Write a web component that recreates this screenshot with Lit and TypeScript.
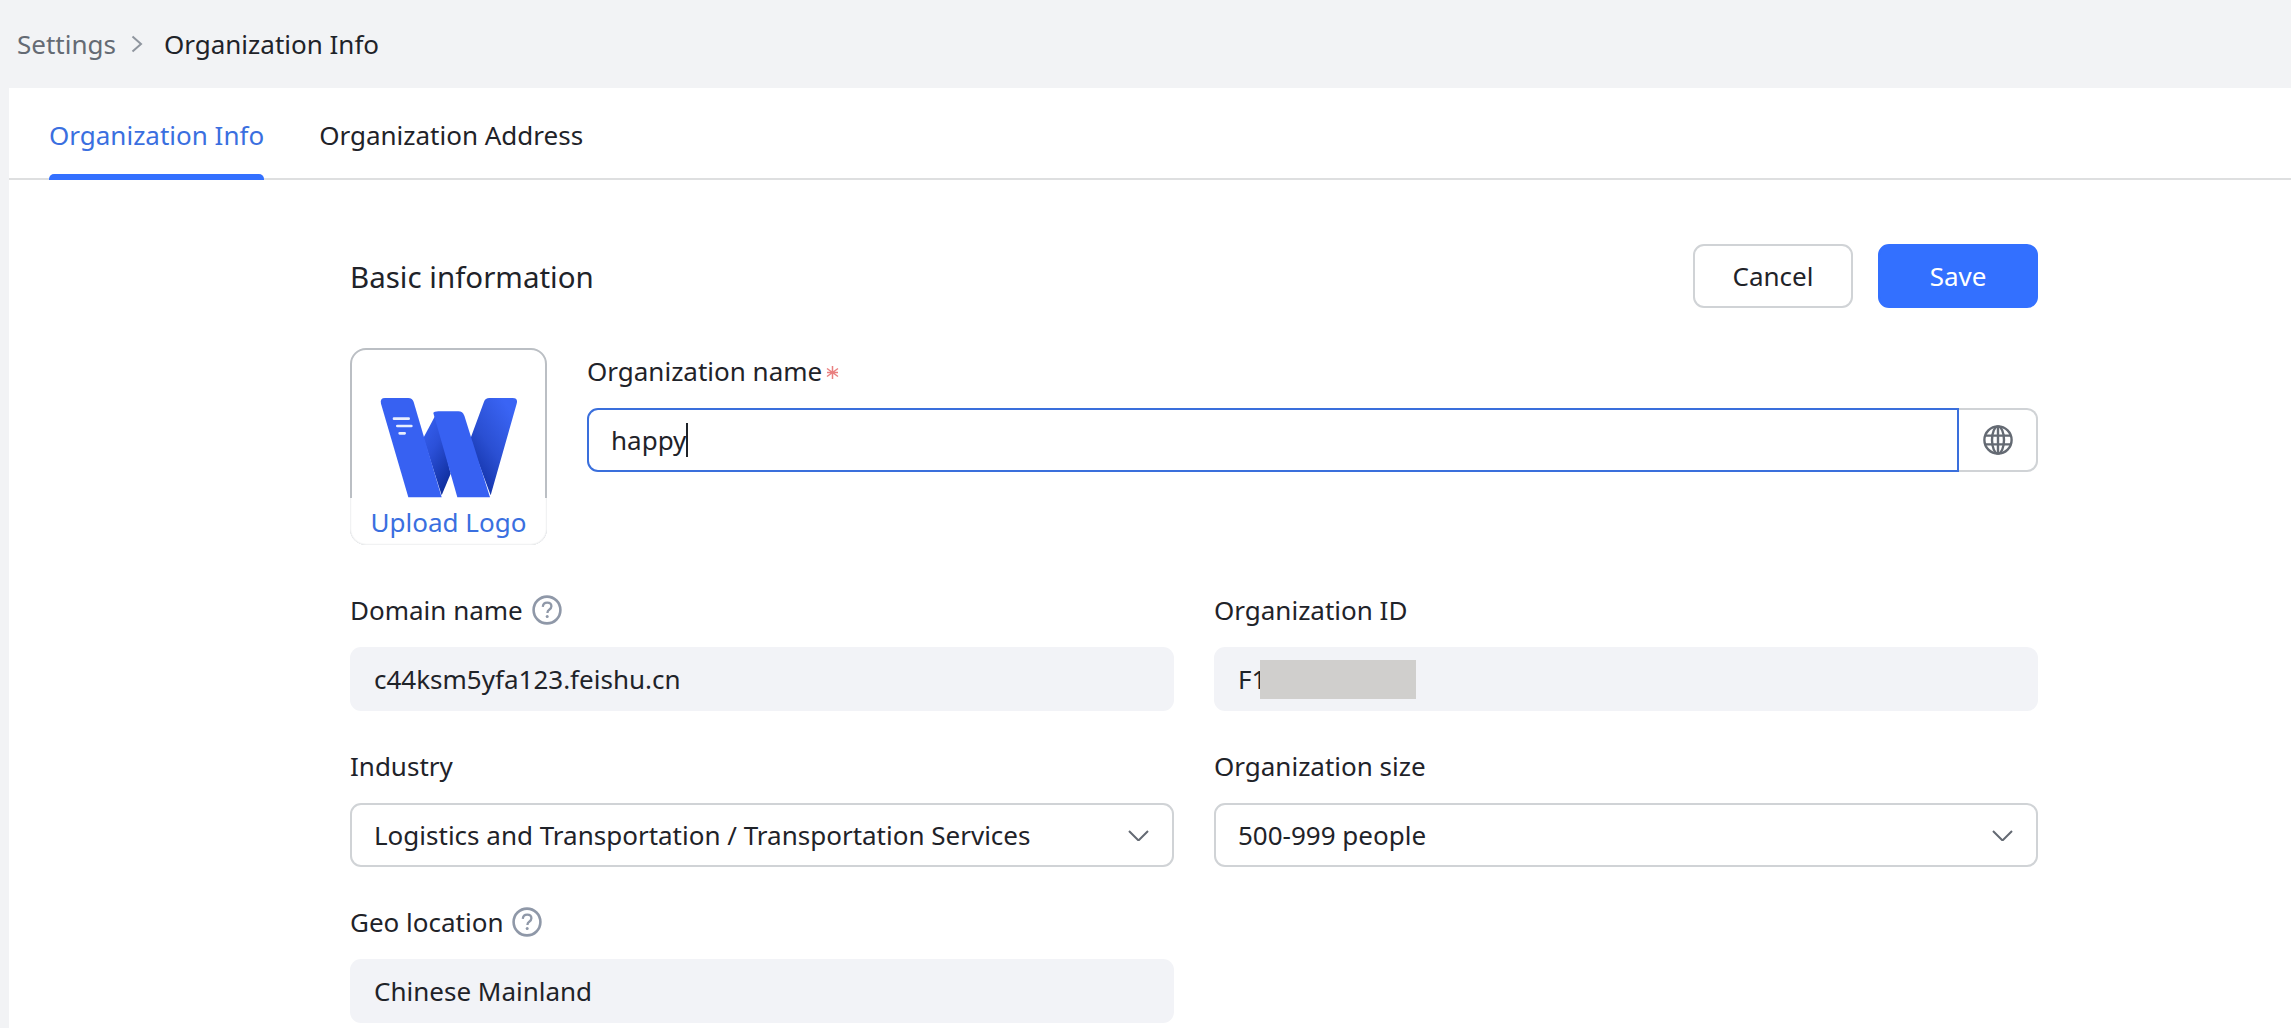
import { css, html, LitElement, svg } from "lit";
import { customElement } from "lit/decorators.js";

const helpIcon = html`<svg class="help" viewBox="0 0 30 30" aria-hidden="true">
  <circle cx="15" cy="15" r="13.4" fill="none" stroke="currentColor" stroke-width="2.6" />
  <path d="M10.8 11.8c.2-2.6 2-4.1 4.4-4.1 2.5 0 4.2 1.5 4.2 3.6 0 1.6-.8 2.5-2.2 3.4-1.2.8-1.7 1.4-1.7 2.8v.6" fill="none" stroke="currentColor" stroke-width="2.3" />
  <circle cx="15.2" cy="21.6" r="1.5" fill="currentColor" />
</svg>`;

const chevron = html`<svg class="chevron" viewBox="0 0 21 11" aria-hidden="true">
  <path d="M1 1l9.5 9.5L20 1" fill="none" stroke="currentColor" stroke-width="2" />
</svg>`;

const logo = svg`
  <defs>
    <linearGradient id="fold-a" x1="0.1" y1="0" x2="0.6" y2="1">
      <stop offset="0" stop-color="#3761f2" />
      <stop offset="0.45" stop-color="#2b50d8" />
      <stop offset="1" stop-color="#0f2f9f" />
    </linearGradient>
    <linearGradient id="fold-b" x1="0.1" y1="0.95" x2="0.75" y2="0.05">
      <stop offset="0" stop-color="#0d2c9e" />
      <stop offset="0.5" stop-color="#2a4fd2" />
      <stop offset="1" stop-color="#3a64f4" />
    </linearGradient>
  </defs>
  <path d="M280 325L320 250L362 432L335 497Z" fill="url(#fold-a)" />
  <path d="M478 205H548Q565 205 560 222L482 497L420 330L462 216Q466 205 478 205Z" fill="url(#fold-b)" />
  <path d="M165 205H235Q247 205 251 217L335 503H235L153 222Q149 205 165 205Z" fill="#3761f2" />
  <path d="M325 245H385Q398 245 403 258L480 503H382L310 250Q312 245 325 245Z" fill="#3761f2" />
  <g fill="none" stroke="#e8eefe" stroke-width="8" stroke-linecap="round">
    <path d="M192 267H236M202 289H244M209 311H224" />
  </g>
`;

@customElement("app-root")
export class AppRoot extends LitElement {
  static styles = css`
    :host {
      display: block;
      width: 2291px;
      height: 1028px;
      overflow: hidden;
      background: #f2f3f5;
      color: #1f2329;
      font-family: "Noto Sans", "Liberation Sans", sans-serif;
      font-size: 26px;
    }

    .crumbs {
      display: flex;
      align-items: center;
      height: 88px;
      padding-left: 17px;
      box-sizing: border-box;
    }

    .crumbs .parent {
      color: #646a73;
    }

    .crumbs svg {
      width: 12px;
      height: 18px;
      margin: 0 21px 0 15px;
      color: #8f959e;
    }

    .panel {
      margin-left: 9px;
      height: 940px;
      background: #fff;
    }

    .tabs {
      display: flex;
      gap: 55px;
      height: 92px;
      padding-left: 40px;
      box-sizing: border-box;
      border-bottom: 2px solid #dedfe0;
    }

    .tab {
      position: relative;
      display: flex;
      align-items: center;
      height: 92px;
      padding-top: 1px;
      box-sizing: border-box;
    }

    .tab.active {
      color: #3a6fe0;
    }

    .tab.active::after {
      content: "";
      position: absolute;
      left: 0;
      right: 0;
      bottom: 0;
      height: 6px;
      background: #3370ff;
      border-radius: 5px 5px 0 0;
    }

    .content {
      width: 1688px;
      margin-left: 341px;
    }

    .head {
      display: flex;
      align-items: center;
      justify-content: space-between;
      margin-top: 64px;
      height: 64px;
    }

    .head h2 {
      margin: 0;
      font-size: 29.5px;
      font-weight: 400;
    }

    .actions {
      display: flex;
      gap: 25px;
    }

    .btn {
      display: flex;
      align-items: center;
      justify-content: center;
      height: 64px;
      width: 160px;
      box-sizing: border-box;
      border: 2px solid #d0d3d6;
      border-radius: 11px;
      background: #fff;
    }

    .btn.primary {
      background: #3370ff;
      border-color: #3370ff;
      color: #fff;
    }

    .identity {
      display: flex;
      gap: 40px;
      margin-top: 40px;
    }

    .logo-card {
      position: relative;
      flex: none;
      width: 197px;
      height: 197px;
      box-sizing: border-box;
      border: 2px solid #bbbfc4;
      border-radius: 16px;
      background: #fff;
    }

    .logo-card svg {
      display: block;
      width: 193px;
      height: 193px;
    }

    .logo-card .upload {
      position: absolute;
      left: -2px;
      right: -2px;
      bottom: -2px;
      height: 47px;
      display: flex;
      align-items: center;
      justify-content: center;
      box-sizing: border-box;
      padding-top: 2px;
      border: 1px solid #f1f2f3;
      border-top: 0;
      border-radius: 0 0 16px 16px;
      background: rgba(255, 255, 255, 0.95);
      color: #3a6fe0;
    }

    .name-col {
      flex: 1;
      padding-top: 3px;
    }

    .label {
      display: flex;
      align-items: center;
      gap: 9px;
      height: 40px;
      margin-bottom: 17px;
    }

    .label .req {
      width: 13px;
      height: 15px;
      margin: 3px 0 0 -5px;
      color: #e98080;
    }

    .help {
      width: 30px;
      height: 30px;
      color: #8f98a8;
    }

    .name-input {
      display: flex;
      height: 64px;
    }

    .name-box {
      flex: 1;
      display: flex;
      align-items: center;
      padding-left: 22px;
      border: 2px solid #3a6fdc;
      border-radius: 11px 0 0 11px;
    }

    .caret {
      width: 2px;
      height: 34px;
      background: #1f2329;
    }

    .lang {
      display: flex;
      align-items: center;
      justify-content: center;
      flex: none;
      width: 79px;
      box-sizing: border-box;
      border: 2px solid #d0d3d6;
      border-left: 0;
      border-radius: 0 11px 11px 0;
      color: #646a73;
    }

    .lang svg {
      width: 30px;
      height: 30px;
    }

    .grid {
      display: grid;
      grid-template-columns: 824px 824px;
      column-gap: 40px;
      row-gap: 35px;
      margin-top: 45px;
    }

    .value {
      position: relative;
      display: flex;
      align-items: center;
      justify-content: space-between;
      height: 64px;
      box-sizing: border-box;
      padding: 0 25px 0 24px;
      border-radius: 11px;
    }

    .value.readonly {
      background: #f2f3f7;
    }

    .value.select {
      padding: 0 23px 0 22px;
      border: 2px solid #d0d3d6;
    }

    .chevron {
      width: 21px;
      height: 11px;
      color: #646a73;
    }

    .redact {
      position: absolute;
      left: 46px;
      top: 13px;
      width: 156px;
      height: 39px;
      background: #d0cfcd;
    }
  `;

  render() {
    return html`
      <div class="crumbs">
        <span class="parent">Settings</span>
        <svg viewBox="0 0 12 18" aria-hidden="true">
          <path d="M1.5 1.5l8.5 7.5-8.5 7.5" fill="none" stroke="currentColor" stroke-width="2" />
        </svg>
        <span>Organization Info</span>
      </div>
      <div class="panel">
        <div class="tabs">
          <div class="tab active">Organization Info</div>
          <div class="tab">Organization Address</div>
        </div>
        <div class="content">
          <div class="head">
            <h2>Basic information</h2>
            <div class="actions">
              <div class="btn">Cancel</div>
              <div class="btn primary">Save</div>
            </div>
          </div>
          <div class="identity">
            <div class="logo-card">
              <svg viewBox="66 61 579 579" aria-hidden="true">${logo}</svg>
              <div class="upload">Upload Logo</div>
            </div>
            <div class="name-col">
              <div class="label">
                Organization name
                <svg class="req" viewBox="0 0 13 15" aria-hidden="true">
                  <path d="M6.5 1v13M1 3.5l11 8M12 3.5l-11 8M1 7.5h11" fill="none" stroke="currentColor" stroke-width="1.5" />
                </svg>
              </div>
              <div class="name-input">
                <div class="name-box">happy<span class="caret"></span></div>
                <div class="lang">
                  <svg viewBox="0 0 30 30" fill="none" stroke="currentColor" stroke-width="2.4" aria-hidden="true">
                    <circle cx="15" cy="15" r="13.6" />
                    <ellipse cx="15" cy="15" rx="6" ry="13.6" />
                    <path d="M15 1.4v27.2M2 10.6h26M2 19.4h26" />
                  </svg>
                </div>
              </div>
            </div>
          </div>
          <div class="grid">
            <div>
              <div class="label">Domain name ${helpIcon}</div>
              <div class="value readonly">c44ksm5yfa123.feishu.cn</div>
            </div>
            <div>
              <div class="label">Organization ID</div>
              <div class="value readonly">F1<span class="redact"></span></div>
            </div>
            <div>
              <div class="label">Industry</div>
              <div class="value select">Logistics and Transportation / Transportation Services ${chevron}</div>
            </div>
            <div>
              <div class="label">Organization size</div>
              <div class="value select">500-999 people ${chevron}</div>
            </div>
            <div>
              <div class="label">Geo location ${helpIcon}</div>
              <div class="value readonly">Chinese Mainland</div>
            </div>
          </div>
        </div>
      </div>
    `;
  }
}

declare global {
  interface HTMLElementTagNameMap {
    "app-root": AppRoot;
  }
}
